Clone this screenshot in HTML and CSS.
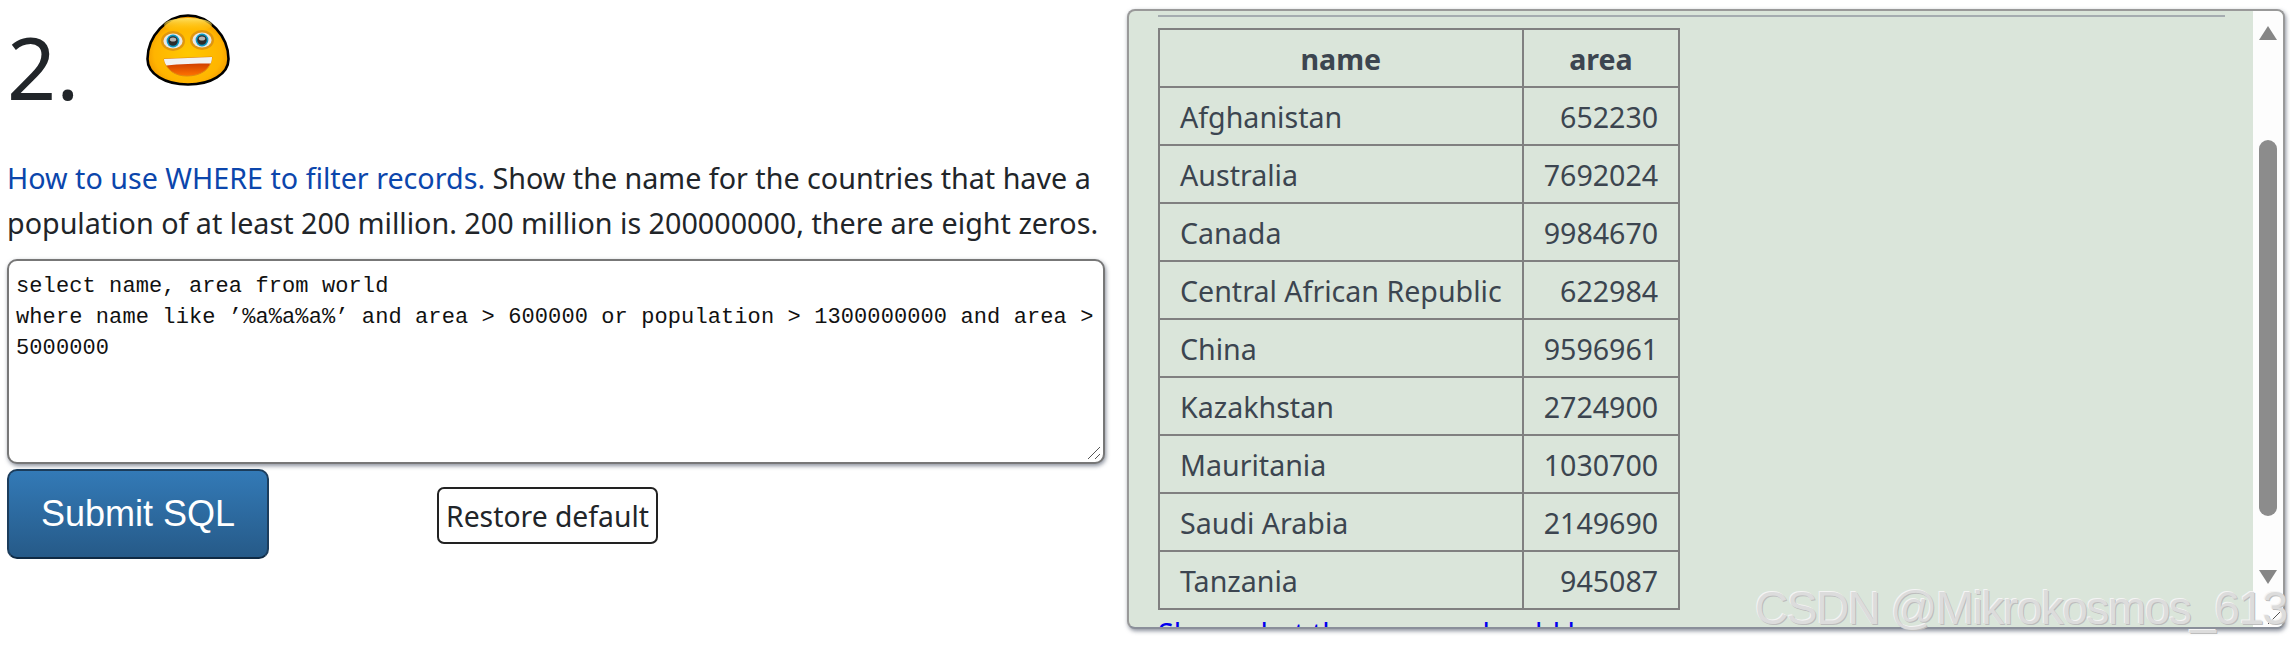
FILE: index.html
```html
<!DOCTYPE html>
<html lang="en">
<head>
    <meta charset="UTF-8">
    <title>SELECT from WORLD</title>
    <link rel="stylesheet" href="styles.css">
</head>
<body>

<div class="page">
    <div class="question">
        <div class="heading">
            <h2>2.</h2>
            <svg class="smiley" viewBox="0 0 84 72" width="84" height="72">
                <defs>
                    <radialGradient id="skin" cx="50%" cy="55%" r="58%">
                        <stop offset="0" stop-color="#ffc800"/>
                        <stop offset="0.72" stop-color="#ffb400"/>
                        <stop offset="1" stop-color="#e98c00"/>
                    </radialGradient>
                    <linearGradient id="shine" x1="0" y1="0" x2="0" y2="1">
                        <stop offset="0" stop-color="#ffe466"/>
                        <stop offset="1" stop-color="#ffc800" stop-opacity="0"/>
                    </linearGradient>
                    <linearGradient id="mouth" x1="0" y1="0" x2="0" y2="1">
                        <stop offset="0" stop-color="#b82400"/>
                        <stop offset="1" stop-color="#ff7400"/>
                    </linearGradient>
                </defs>
                <path d="M42 1.5C63 1.5 82.5 22 82.5 45C82.5 60 65 70.5 42 70.5C19 70.5 1.5 60 1.5 45C1.5 22 21 1.5 42 1.5Z" fill="url(#skin)" stroke="#000" stroke-width="2.6"/>
                <ellipse cx="42" cy="11" rx="24" ry="7" fill="url(#shine)"/>
                <ellipse cx="27" cy="27" rx="12" ry="10" fill="#e0960e"/>
                <ellipse cx="56" cy="26" rx="12" ry="10" fill="#e0960e"/>
                <ellipse cx="27" cy="27" rx="9.6" ry="7.6" fill="#e8e8e8"/>
                <ellipse cx="56" cy="26" rx="9.6" ry="7.6" fill="#e8e8e8"/>
                <circle cx="27" cy="27" r="6.4" fill="#0c9ac4"/>
                <circle cx="56" cy="26" r="6.4" fill="#0c9ac4"/>
                <circle cx="27" cy="27" r="4.8" fill="#2c2c2c"/>
                <circle cx="56" cy="26" r="4.8" fill="#2c2c2c"/>
                <ellipse cx="27" cy="25.5" rx="3.2" ry="2" fill="#b5b5b5"/>
                <ellipse cx="56" cy="24.5" rx="3.2" ry="2" fill="#b5b5b5"/>
                <path d="M18 45L66 43C65 56 54 62 41 62C29 62 20 56 18 45Z" fill="url(#mouth)" stroke="#e08a10" stroke-width="1"/>
                <path d="M18 45L66 43C66 45 65.5 48 64.5 49.5C50 49.5 33 50 20.5 51.5C19 49.5 18 47 18 45Z" fill="#f2f2f2"/>
            </svg>
        </div>
        <p class="intro"><a class="howto" href="#">How to use WHERE to filter records.</a> Show the name for the countries that have a population of at least 200 million. 200 million is 200000000, there are eight zeros.</p>
        <div class="editor">select name, area from world
where name like ’%a%a%a%’ and area &gt; 600000 or population &gt; 1300000000 and area &gt; 5000000
            <svg class="grip" viewBox="0 0 14 14" width="14" height="14"><path d="M1 13L13 1M8 13L13 8" stroke="#555" stroke-width="1"/></svg>
        </div>
        <div class="buttons">
            <button class="submit">Submit SQL</button>
            <button class="restore">Restore default</button>
        </div>
    </div>

    <div class="results">
        <div class="results-body">
            <hr>
            <table>
                <thead>
                    <tr><th>name</th><th>area</th></tr>
                </thead>
                <tbody>
                    <tr><td>Afghanistan</td><td class="num">652230</td></tr>
                    <tr><td>Australia</td><td class="num">7692024</td></tr>
                    <tr><td>Canada</td><td class="num">9984670</td></tr>
                    <tr><td>Central African Republic</td><td class="num">622984</td></tr>
                    <tr><td>China</td><td class="num">9596961</td></tr>
                    <tr><td>Kazakhstan</td><td class="num">2724900</td></tr>
                    <tr><td>Mauritania</td><td class="num">1030700</td></tr>
                    <tr><td>Saudi Arabia</td><td class="num">2149690</td></tr>
                    <tr><td>Tanzania</td><td class="num">945087</td></tr>
                </tbody>
            </table>
            <a class="answer" href="#">Show what the answer should be...</a>
        </div>
        <div class="scrollbar">
            <span class="arrow-up"></span>
            <span class="thumb"></span>
            <span class="arrow-down"></span>
        </div>
        <svg class="grip" viewBox="0 0 14 14" width="14" height="14"><path d="M1 13L13 1M8 13L13 8" stroke="#555" stroke-width="1"/></svg>
    </div>
</div>

<div class="watermark">CSDN @Mikrokosmos_613</div>

</body>
</html>
```

FILE: styles.css
```css
html, body {
    margin: 0;
    padding: 0;
    background: #fff;
    overflow: hidden;
}
body {
    font-family: "Noto Sans", Arial, sans-serif;
    color: #212529;
    height: 648px;
    position: relative;
}
.page {
    display: flex;
    align-items: flex-start;
}
.question {
    width: 1098px;
    margin-left: 7px;
    flex: none;
}
.heading {
    display: flex;
    align-items: flex-start;
    height: 130px;
}
h2 {
    margin: 9px 0 0 0;
    font-size: 86px;
    font-weight: 400;
    line-height: 115px;
    width: 139px;
}
.smiley {
    margin-top: 14px;
}
.intro {
    margin: 25px 0 0 0;
    font-size: 28.7px;
    line-height: 45px;
}
.howto {
    color: #0b46ac;
    text-decoration: none;
}
.editor {
    position: relative;
    box-sizing: border-box;
    height: 205px;
    margin-top: 14px;
    padding: 10px 7px;
    background: #fff;
    border: 2px solid #777;
    border-radius: 10px;
    box-shadow: 1px 2px 4px rgba(60, 70, 90, 0.6);
    font-family: "Liberation Mono", monospace;
    font-size: 22px;
    letter-spacing: 0.1px;
    line-height: 31px;
    color: #111;
    white-space: pre-wrap;
}
.grip {
    position: absolute;
    right: 2px;
    bottom: 2px;
}
.buttons {
    display: flex;
    align-items: center;
    margin-top: 5px;
}
.submit {
    width: 262px;
    height: 90px;
    background: linear-gradient(#337ab7, #265a88);
    border: 2px solid #1c3d5c;
    border-bottom-color: #0f2a44;
    border-radius: 10px;
    color: #fff;
    font-family: "Liberation Sans", Arial, sans-serif;
    font-size: 36px;
    cursor: pointer;
}
.restore {
    margin-left: 168px;
    margin-top: 3px;
    box-sizing: border-box;
    width: 221px;
    height: 57px;
    padding: 0;
    background: #fff;
    border: 2px solid #222;
    border-radius: 7px;
    color: #212529;
    font-family: "Noto Sans", Arial, sans-serif;
    font-size: 28.3px;
    cursor: pointer;
}
.results {
    position: relative;
    box-sizing: border-box;
    display: flex;
    width: 1158px;
    height: 620px;
    margin: 9px 0 0 22px;
    background: #dae5da;
    border: 2px solid #999;
    border-bottom-color: #8a8f9a;
    border-radius: 8px;
    box-shadow: 1px 2px 4px rgba(60, 70, 90, 0.6);
    overflow: hidden;
    flex: none;
}
.results-body {
    flex: 1;
    padding: 4px 0 0 29px;
    overflow: hidden;
}
hr {
    width: 1067px;
    margin: 0 0 11px 0;
    height: 2px;
    border: 0;
    background: #a5acb0;
}
table {
    border-collapse: collapse;
    color: #3c4550;
    font-size: 28.6px;
    border: 2px solid #808080;
}
th, td {
    border: 2px solid #808080;
    height: 58px;
    padding: 0 20px;
    text-align: left;
    box-sizing: border-box;
}
th {
    text-align: center;
    font-weight: 700;
}
.num {
    text-align: right;
}
.answer {
    display: block;
    margin-top: 5px;
    color: #0000ee;
    font-size: 28.6px;
    line-height: 36px;
    text-decoration: none;
}
.scrollbar {
    position: relative;
    flex: none;
    width: 30px;
    background: #fdfdfd;
}
.arrow-up, .arrow-down {
    position: absolute;
    left: 6px;
    width: 0;
    height: 0;
    border-left: 9px solid transparent;
    border-right: 9px solid transparent;
}
.arrow-up {
    top: 15px;
    border-bottom: 14px solid #868686;
}
.arrow-down {
    bottom: 43px;
    border-top: 14px solid #868686;
}
.thumb {
    position: absolute;
    left: 6px;
    top: 129px;
    width: 18px;
    height: 376px;
    background: #8c8c8c;
    border-radius: 9px;
}
.watermark {
    position: absolute;
    left: 1755px;
    top: 583px;
    font-family: "Liberation Sans", Arial, sans-serif;
    font-size: 46px;
    line-height: 50px;
    color: #dcdcdc;
    letter-spacing: -1.5px;
    text-shadow: 1px 1px 0 #bdbdbd, -1px -1px 0 #f4f4f4;
    white-space: nowrap;
}
```
